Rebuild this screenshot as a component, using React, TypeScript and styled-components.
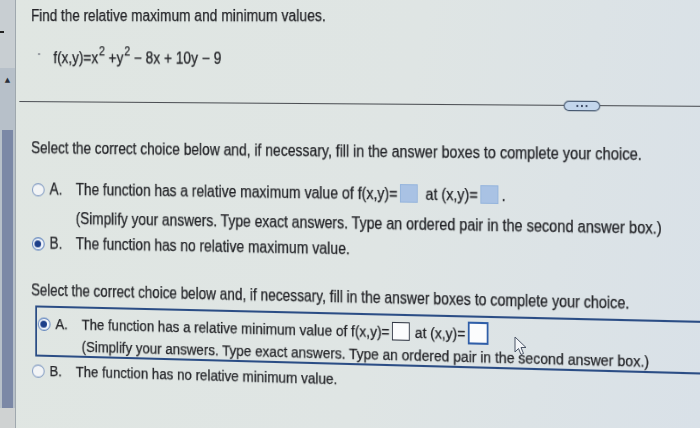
import React from 'react';
import styled, { createGlobalStyle } from 'styled-components';

const Global = createGlobalStyle`
  html, body { margin: 0; padding: 0; }
  body {
    width: 700px; height: 428px; overflow: hidden;
    background: linear-gradient(100deg, #e0e6e2 0%, #dfe5e4 55%, #d9e1e8 100%);
    font-family: "Liberation Sans", Arial, sans-serif;
    color: #232428;
  }
`;

const Page = styled.div`
  display: flex;
  width: 700px;
  height: 428px;
  position: relative;
  overflow: hidden;
`;

const Sidebar = styled.div`
  width: 15px;
  flex: none;
  display: flex;
  flex-direction: column;
  border-right: 1px solid #9fa8ae;
  background: #b7c0c9;
`;

const SideTop = styled.div`
  height: 68px;
  background: #c8ced2;
  display: flex;
  align-items: center;
  padding-bottom: 4px;
  box-sizing: border-box;
`;

const Dash = styled.div`
  width: 4px;
  height: 2px;
  background: #222;
`;

const SideArrow = styled.div`
  height: 62px;
  display: flex;
  justify-content: center;
  padding-top: 8px;
  box-sizing: border-box;
  font-size: 7px;
  color: #2a2f3a;
  font-family: "DejaVu Sans", sans-serif;
`;

const Thumb = styled.div`
  margin: 0 2px;
  height: 278px;
  background: #7b88a6;
`;

const SideBottom = styled.div`
  flex: 1;
  background: #cfd2d2;
`;

const Main = styled.div`
  flex: none;
  width: 815px;
  box-sizing: border-box;
  padding: 6px 0 0 18px;
  font-size: 16px;
  -webkit-text-stroke: 0.25px #232428;
  transform-origin: 0 12px;
  transform: perspective(1000px) rotateY(-4.5deg) scaleX(0.84);
`;

const Title = styled.div`
  line-height: 20px;
  white-space: nowrap;
`;

const Formula = styled.div`
  margin-top: 22px;
  line-height: 20px;
  display: flex;
  align-items: center;
  white-space: nowrap;
`;

const Bullet = styled.span`
  width: 2.5px;
  height: 2px;
  border-radius: 50%;
  background: #8a8f96;
  margin: 0 16px 8px 8px;
`;

const Sup = styled.sup`
  font-size: 12.5px;
  vertical-align: 8px;
  line-height: 0;
  margin-left: 1px;
`;

const DividerRow = styled.div`
  margin: 28px 0 0 -14px;
  height: 11px;
  display: flex;
  align-items: center;
`;

const Rule = styled.div<{ $w?: number }>`
  height: 1.5px;
  background: #4a4d52;
  ${(p) => (p.$w ? `width: ${p.$w}px; flex: none;` : 'flex: 1;')}
`;

const Pill = styled.div`
  width: 38px;
  height: 8px;
  border: 1.5px solid #34465e;
  border-radius: 7px / 6px;
  background: #c3d6ec;
  display: flex;
  justify-content: center;
  align-items: center;
  gap: 2.5px;
`;

const PillDot = styled.span`
  width: 2.5px;
  height: 2px;
  background: #1e2a44;
  border-radius: 50%;
`;

const Instruction = styled.div<{ $mt: number; $size?: number }>`
  margin-top: ${(p) => p.$mt}px;
  line-height: 20px;
  white-space: nowrap;
  ${(p) => (p.$size ? `font-size: ${p.$size}px;` : '')}
`;

const Lower = styled.div`
  font-size: 15.5px;
`;

const Choice = styled.div<{ $mt: number; $lh?: number; $h?: number }>`
  margin-top: ${(p) => p.$mt}px;
  display: grid;
  grid-template-columns: 22px 31px 1fr;
  align-items: start;
  line-height: ${(p) => p.$lh ?? 22}px;
  height: ${(p) => p.$h ?? p.$lh ?? 22}px;
  white-space: nowrap;
`;

const Radio = styled.span<{ $on?: boolean }>`
  width: 12.5px;
  height: 11px;
  margin: 4.5px 0 0 1px;
  border-radius: 50%;
  border: 1.5px solid ${(p) => (p.$on ? '#3b67b0' : '#6e8bba')};
  background: ${(p) => (p.$on ? '#f5f8fc' : '#f2f4f6')};
  display: flex;
  align-items: center;
  justify-content: center;
  -webkit-text-stroke: 0;
  &::after {
    content: '';
    width: 8px;
    height: 7px;
    border-radius: 50%;
    background: ${(p) => (p.$on ? '#1d3f8a' : 'transparent')};
  }
`;

const Letter = styled.span``;

const Text = styled.span``;

const AnswerBox = styled.span<{ $kind: 'filled' | 'empty' | 'focus'; $gap?: number }>`
  display: inline-block;
  box-sizing: border-box;
  vertical-align: middle;
  margin: -3px ${(p) => p.$gap ?? 6}px 0 3px;
  width: ${(p) => (p.$kind === 'focus' ? 23 : 19.5)}px;
  height: ${(p) => (p.$kind === 'focus' ? 22 : 18)}px;
  background: ${(p) => (p.$kind === 'filled' ? '#a9c2e4' : '#fbfcfd')};
  border: ${(p) =>
    p.$kind === 'filled'
      ? '1px solid #93b3dc'
      : p.$kind === 'focus'
      ? '2px solid #2f5ea8'
      : '1.5px solid #2d3340'};
`;

const Boxed = styled.div`
  margin: 5px 0 0 5px;
  border: 2px solid #2b4d85;
  border-right: none;
  padding: 5px 0 0 0;
  box-sizing: border-box;
`;

const Cursor = styled.svg`
  position: absolute;
  left: 514px;
  top: 336px;
`;

export default function App() {
  return (
    <>
      <Global />
      <Page>
        <Sidebar>
          <SideTop>
            <Dash />
          </SideTop>
          <SideArrow>▲</SideArrow>
          <Thumb />
          <SideBottom />
        </Sidebar>
        <Main>
          <Title>Find the relative maximum and minimum values.</Title>
          <Formula>
            <Bullet />
            <span>
              f(x,y)=x<Sup>2</Sup> +y<Sup>2</Sup> − 8x + 10y − 9
            </span>
          </Formula>
          <DividerRow>
            <Rule $w={623} />
            <Pill>
              <PillDot />
              <PillDot />
              <PillDot />
            </Pill>
            <Rule />
          </DividerRow>
          <Instruction $mt={31}>
            Select the correct choice below and, if necessary, fill in the answer boxes to complete your choice.
          </Instruction>
          <Choice $mt={20}>
            <Radio />
            <Letter>A.</Letter>
            <Text>
              The function has a relative maximum value of f(x,y)=
              <AnswerBox $kind="filled" $gap={9} />
              at (x,y)=
              <AnswerBox $kind="filled" $gap={4} />.
            </Text>
          </Choice>
          <Choice $mt={7}>
            <span />
            <span />
            <Text>(Simplify your answers. Type exact answers. Type an ordered pair in the second answer box.)</Text>
          </Choice>
          <Choice $mt={3}>
            <Radio $on />
            <Letter>B.</Letter>
            <Text>The function has no relative maximum value.</Text>
          </Choice>
          <Lower>
            <Instruction $mt={26} $size={15.7}>
              Select the correct choice below and, if necessary, fill in the answer boxes to complete your choice.
            </Instruction>
            <Boxed>
              <Choice $mt={0}>
                <Radio $on />
                <Letter>A.</Letter>
                <Text>
                  The function has a relative minimum value of f(x,y)=
                  <AnswerBox $kind="empty" />
                  at (x,y)=
                  <AnswerBox $kind="focus" />
                </Text>
              </Choice>
              <Choice $mt={1} $lh={20} $h={19}>
                <span />
                <span />
                <Text>(Simplify your answers. Type exact answers. Type an ordered pair in the second answer box.)</Text>
              </Choice>
            </Boxed>
            <Choice $mt={3}>
              <Radio />
              <Letter>B.</Letter>
              <Text>The function has no relative minimum value.</Text>
            </Choice>
          </Lower>
        </Main>
        <Cursor width="14" height="20" viewBox="0 0 14 20">
          <path d="M1 1 L1 16 L4.5 12.5 L7 18.5 L9.5 17.5 L7 11.5 L12 11.5 Z" fill="#f4f6f8" stroke="#4a5466" strokeWidth="1" strokeLinejoin="round" />
        </Cursor>
      </Page>
    </>
  );
}
